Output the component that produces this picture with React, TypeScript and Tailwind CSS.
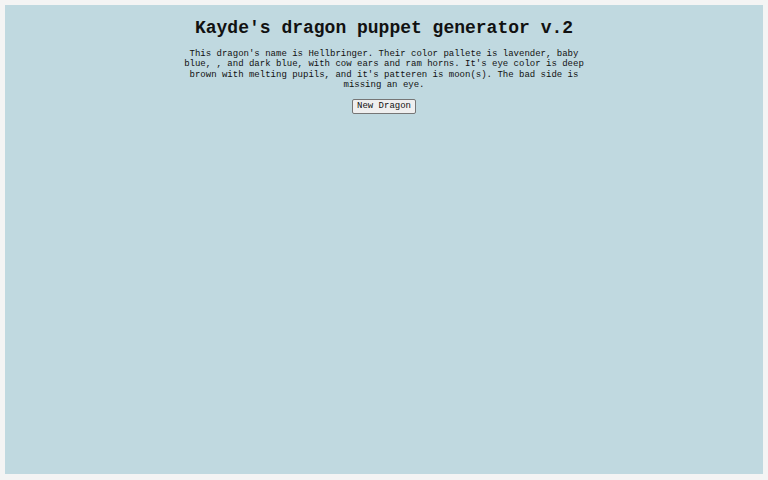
import React from 'react';

const mono = { fontFamily: '"Liberation Mono", "Courier New", monospace' };

const App = () => {
  return (
    <div className="h-[480px] w-full bg-[#f4f4f4] px-[5px] pt-[5px] pb-[6px]" style={mono}>
      <div className="flex h-full flex-col items-center bg-[#c0d9e0] text-[#111]">
        <h1 className="mt-[12px] text-[18px] leading-[22px] font-bold">
          Kayde's dragon puppet generator v.2
        </h1>
        <p className="mt-[10px] w-[405px] text-center text-[9px] leading-[10.3px]">
          This dragon's name is Hellbringer. Their color pallete is lavender, baby blue, , and
          dark blue, with cow ears and ram horns. It's eye color is deep brown with melting
          pupils, and it's patteren is moon(s). The bad side is missing an eye.
        </p>
        <button className="mt-[9px] h-[15px] rounded-[2px] border border-[#767676] bg-[#efefef] px-[4px] text-[9px] leading-[13px]">
          New Dragon
        </button>
      </div>
    </div>
  );
};

export default App;
